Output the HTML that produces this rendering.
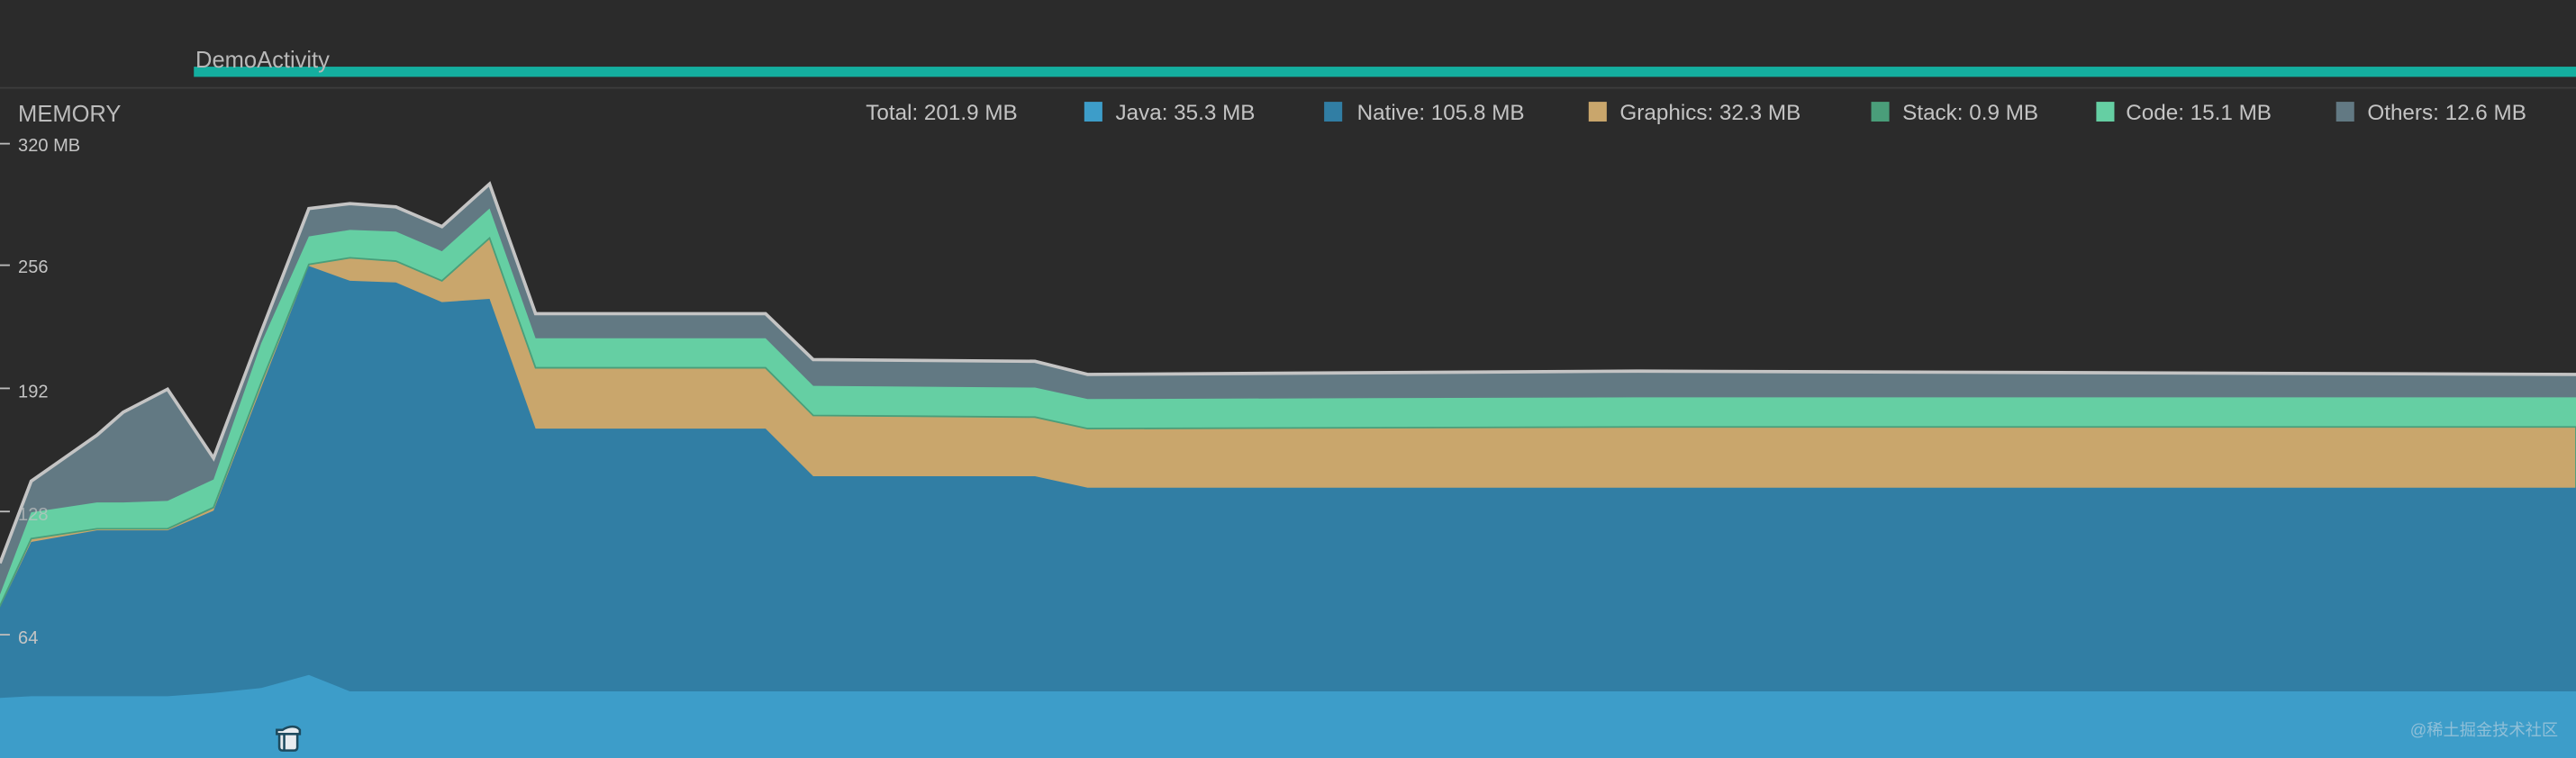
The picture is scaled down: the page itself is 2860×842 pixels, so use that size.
<!DOCTYPE html>
<html><head><meta charset="utf-8"><style>
html,body{margin:0;padding:0;background:#2b2b2b;width:2860px;height:842px;overflow:hidden}
svg{display:block}
text{font-family:"Liberation Sans","Noto Sans CJK SC",sans-serif}
</style></head><body>
<svg width="2860" height="842" viewBox="0 0 1568 461.6" preserveAspectRatio="none" xmlns="http://www.w3.org/2000/svg">
<rect width="1568" height="462" fill="#2b2b2b"/>
<rect x="118" y="40.6" width="1450" height="6.2" fill="#14ae9f"/>
<text x="119" y="41" font-size="14" fill="#b8b8b8">DemoActivity</text>
<rect x="0" y="53" width="1568" height="1" fill="#3d3d3d"/>
<text x="11" y="74" font-size="14" fill="#bcbcbc">MEMORY</text>
<g font-size="13.3" fill="#c4c4c4">
<text x="527" y="73">Total: 201.9 MB</text>
<rect x="660" y="62" width="11" height="12" fill="#3d9dc9"/><text x="679" y="73">Java: 35.3 MB</text>
<rect x="806" y="62" width="11" height="12" fill="#317ea4"/><text x="826" y="73">Native: 105.8 MB</text>
<rect x="967" y="62" width="11" height="12" fill="#c9a66c"/><text x="986" y="73">Graphics: 32.3 MB</text>
<rect x="1139" y="62" width="11" height="12" fill="#4a9e7a"/><text x="1158" y="73">Stack: 0.9 MB</text>
<rect x="1276" y="62" width="11" height="12" fill="#65cfa3"/><text x="1294" y="73">Code: 15.1 MB</text>
<rect x="1422" y="62" width="11" height="12" fill="#627983"/><text x="1441" y="73">Others: 12.6 MB</text>
</g>
<polygon fill="#627983" points="0,343 19,293 59,265 75,251 102,237 130,279 159,202 188,127 213,124 241,126 269,138 298,112 326,191 354,191 466,191 495,219 630,220 662,228 997,226 1568,228 1568,462 0,462"/>
<polygon fill="#65cfa3" points="0,362 19,312 59,306 75,306 102,305 130,292 159,209 188,144 213,140 241,141 269,153 298,127 326,206 354,206 466,206 495,235 630,236 662,243 997,242 1568,242 1568,462 0,462"/>
<polygon fill="#c9a66c" stroke="#4a9e7a" stroke-width="1" points="0,369 19,328 59,322 75,322 102,322 130,309 159,233 188,161 213,157 241,159 269,171 298,145 326,224 354,224 466,224 495,253 630,254 662,261 997,260 1568,260 1568,462 0,462"/>
<polygon fill="#317ea4" points="0,370 19,330 59,323 75,323 102,323 130,311 159,236 188,162 213,171 241,172 269,184 298,182 326,261 354,261 466,261 495,290 630,290 662,297 997,297 1568,297 1568,462 0,462"/>
<polygon fill="#3d9dc9" points="0,425 19,424 59,424 102,424 130,422 159,419 188,411 213,421 1568,421 1568,462 0,462"/>
<polyline fill="none" stroke="#c4c4c4" stroke-width="2" points="0,343 19,293 59,265 75,251 102,237 130,279 159,202 188,127 213,124 241,126 269,138 298,112 326,191 354,191 466,191 495,219 630,220 662,228 997,226 1568,228"/>
<g fill="#c4c4c4" font-size="11">
<text x="11" y="92">320 MB</text>
<text x="11" y="166">256</text>
<text x="11" y="242">192</text>
<text x="11" y="317" opacity="0.7">128</text>
<text x="11" y="392">64</text>
</g>
<g fill="#bbb"><rect x="0" y="87" width="6" height="1"/><rect x="0" y="161" width="6" height="1"/><rect x="0" y="236" width="6" height="1"/><rect x="0" y="311" width="6" height="1"/><rect x="0" y="386" width="6" height="1"/></g>
<g stroke="#1d4a5e" stroke-width="1.4" fill="#e8ecef">
<path d="M168.5,444.5 L172,444.5 Q175,442.5 178,442.5 Q181,442.5 182.5,444.5 L182.5,447 L168.5,447 Z"/>
<path d="M170,447 L181,447 L181,455 Q181,457 179,457 L172,457 Q170,457 170,455 Z"/>
<line x1="173" y1="447" x2="173" y2="456.5"/>
</g>
<text x="1467" y="448" font-size="10" fill="#a4c8dc" opacity="0.8">@稀土掘金技术社区</text>
</svg>
</body></html>
